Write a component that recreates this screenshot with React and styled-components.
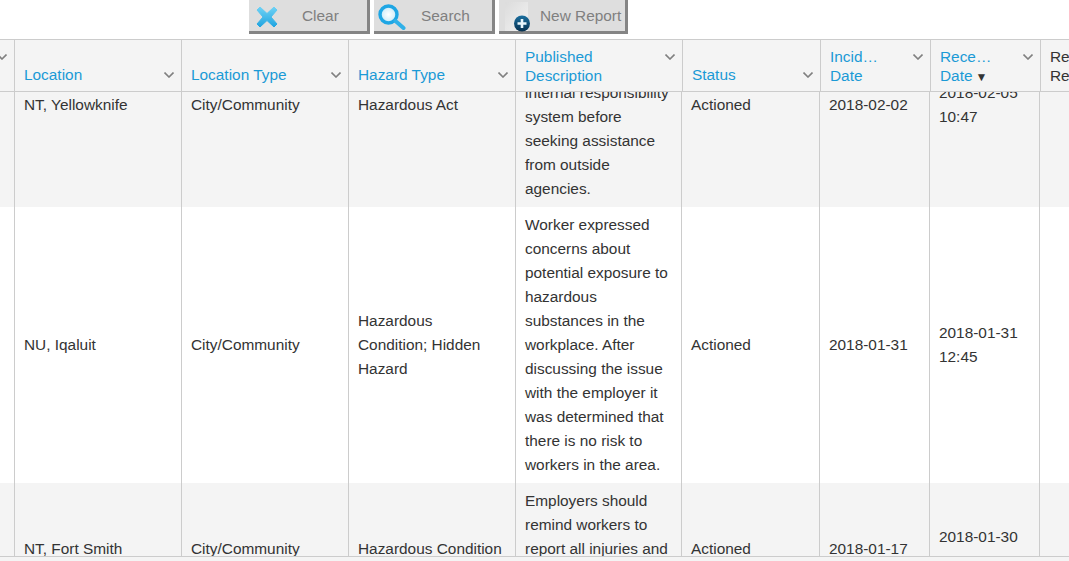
import styled, { createGlobalStyle } from 'styled-components'

const HEAD_COLS = '15px 167px 167px 167px 167px 138px 110px 110px 1fr'
const BODY_COLS = '15px 167px 167px 167px 166px 138px 110px 110px 1fr'

const GlobalStyle = createGlobalStyle`
  html, body {
    margin: 0;
    height: 100%;
    overflow: hidden;
    background: #fff;
    font-family: "Liberation Sans", Arial, sans-serif;
    font-size: 15.4px;
    color: #333;
  }
`

const Page = styled.div`
  width: 1069px;
  height: 561px;
  display: flex;
  flex-direction: column;
  overflow: hidden;
`

const Toolbar = styled.div`
  height: 39px;
  flex: none;
  display: flex;
  gap: 4px;
  padding-left: 249px;
  box-sizing: border-box;
`

const ToolButton = styled.button`
  width: ${(p) => p.$width}px;
  height: 34px;
  box-sizing: border-box;
  display: flex;
  align-items: center;
  padding: 1px 0 0 ${(p) => p.$pad}px;
  margin: 0;
  background: #dedede;
  border: 0;
  border-right: 3px solid #858585;
  border-bottom: 3px solid #858585;
  color: #808080;
  font: inherit;
`

const ToolLabel = styled.span`
  margin-left: ${(p) => p.$gap}px;
  white-space: nowrap;
`

const HeaderRow = styled.div`
  height: 53px;
  flex: none;
  display: grid;
  grid-template-columns: ${HEAD_COLS};
  box-sizing: border-box;
  background: #f4f4f4;
  border-top: 1px solid #ccc;
  border-bottom: 1px solid #ccc;
`

const HeaderCell = styled.div`
  display: flex;
  align-items: flex-end;
  box-sizing: border-box;
  padding: 0 7px ${(p) => (p.$double ? 6 : 7)}px ${(p) => (p.$clip ? 0 : 9)}px;
  border-right: 1px solid #ccc;
  overflow: hidden;
  &:last-child {
    border-right: 0;
    padding-right: 0;
  }
`

const HeaderInner = styled.div`
  flex: 1;
  min-width: 0;
  display: flex;
  justify-content: flex-end;
  align-items: flex-start;
`

const HeaderLabel = styled.div`
  flex: 1;
  min-width: 0;
  line-height: 19px;
  white-space: nowrap;
  color: ${(p) => (p.$plain ? '#333' : '#1b9ad6')};
`

const SortMark = styled.span`
  font-size: 12px;
  line-height: 0;
  color: #333;
  margin-left: 3px;
`

const Chevron = styled.svg`
  flex: none;
  width: 10px;
  height: 6px;
  margin-top: 7px;
  fill: none;
  stroke: #808080;
  stroke-width: 1.6;
`

const Viewport = styled.div`
  flex: 1;
  min-height: 0;
  overflow: hidden;
  border-bottom: 1px solid #ccc;
`

const Rows = styled.div`
  margin-top: -89px;
`

const Row = styled.div`
  display: grid;
  grid-template-columns: ${BODY_COLS};
  background: ${(p) => (p.$shaded ? '#f4f4f4' : '#fff')};
`

const Cell = styled.div`
  display: flex;
  flex-direction: column;
  justify-content: center;
  box-sizing: border-box;
  padding: 6px 10px 6px 9px;
  line-height: 24px;
  border-right: 1px solid #ccc;
  &:first-child {
    padding: 0;
  }
  &:last-child {
    border-right: 0;
  }
`

const Description = styled(Cell)`
  display: block;
  white-space: pre-line;
`

const Footer = styled.div`
  height: 4px;
  flex: none;
  background: #f4f4f4;
`

const ClearIcon = () => (
  <svg width="22" height="24" viewBox="0 -2 22 24">
    <defs>
      <linearGradient id="clearBlue" x1="0" y1="0" x2="0" y2="1">
        <stop offset="0" stopColor="#6fd2f5" />
        <stop offset="1" stopColor="#1fa4e0" />
      </linearGradient>
    </defs>
    <path
      d="M1 4 L4 1 L11 7.5 L18 1 L21 4 L15 11 L21 18 L18 21 L11 14.5 L4 21 L1 18 L7 11 Z"
      fill="url(#clearBlue)"
      stroke="url(#clearBlue)"
      strokeLinejoin="round"
    />
  </svg>
)

const SearchIcon = () => (
  <svg width="28" height="28" viewBox="0 -2 28 28">
    <defs>
      <radialGradient id="lens" cx="0.5" cy="0.5" r="0.5">
        <stop offset="0" stopColor="#fff" />
        <stop offset="0.7" stopColor="#d8f0fa" />
        <stop offset="1" stopColor="#8fd6f3" />
      </radialGradient>
    </defs>
    <circle cx="10.5" cy="10.5" r="8.5" fill="url(#lens)" stroke="#1ea6e4" strokeWidth="3.4" />
    <path d="M17.5 17 L25.5 24" stroke="#2fb0e8" strokeWidth="4" strokeLinecap="round" />
  </svg>
)

const NewReportIcon = () => (
  <svg width="26" height="32" viewBox="0 0 26 32">
    <defs>
      <linearGradient id="sheet" x1="0" y1="0" x2="1" y2="1">
        <stop offset="0" stopColor="#dcdcdc" />
        <stop offset="1" stopColor="#f2f2f2" />
      </linearGradient>
      <linearGradient id="disc" x1="0" y1="0" x2="0" y2="1">
        <stop offset="0" stopColor="#1b6f9f" />
        <stop offset="1" stopColor="#06304f" />
      </linearGradient>
    </defs>
    <rect x="0" y="2" width="23" height="29" fill="url(#sheet)" />
    <circle cx="17" cy="23.5" r="8" fill="url(#disc)" />
    <path d="M17 19 V28 M12.5 23.5 H21.5" stroke="#e8f6fc" strokeWidth="2.6" />
  </svg>
)

const columns = [
  { lines: ['', ''], clip: true },
  { lines: ['Location'] },
  { lines: ['Location Type'] },
  { lines: ['Hazard Type'] },
  { lines: ['Published', 'Description'] },
  { lines: ['Status'] },
  { lines: ['Incid…', 'Date'] },
  { lines: ['Rece…', 'Date'], sorted: true },
  { lines: ['Response', 'Received'], plain: true, noChevron: true },
]

const rows = [
  {
    location: 'NT, Yellowknife',
    hazard: 'Hazardous Act',
    description:
      'Workers are encouraged to use the workplace\ninternal responsibility system before\nseeking assistance\nfrom outside\nagencies.',
    status: 'Actioned',
    incident: '2018-02-02',
    received: ['2018-02-05', '10:47'],
  },
  {
    location: 'NU, Iqaluit',
    hazard: 'Hazardous Condition; Hidden Hazard',
    description:
      'Worker expressed concerns about potential exposure to hazardous substances in the workplace. After discussing the issue with the employer it was determined that there is no risk to workers in the area.',
    status: 'Actioned',
    incident: '2018-01-31',
    received: ['2018-01-31', '12:45'],
  },
  {
    location: 'NT, Fort Smith',
    hazard: 'Hazardous Condition',
    description:
      'Employers should remind workers to report all injuries and incidents to their employer.',
    status: 'Actioned',
    incident: '2018-01-17',
    received: ['2018-01-30', '10:00'],
  },
]

const App = () => {
  return (
    <Page>
      <GlobalStyle />
      <Toolbar>
        <ToolButton $width={121} $pad={7}>
          <ClearIcon />
          <ToolLabel $gap={24}>Clear</ToolLabel>
        </ToolButton>
        <ToolButton $width={121} $pad={4}>
          <SearchIcon />
          <ToolLabel $gap={15}>Search</ToolLabel>
        </ToolButton>
        <ToolButton $width={129} $pad={6}>
          <NewReportIcon />
          <ToolLabel $gap={9}>New Report</ToolLabel>
        </ToolButton>
      </Toolbar>

      <HeaderRow>
        {columns.map((col, i) => (
          <HeaderCell key={i} $clip={col.clip} $double={col.lines.length > 1}>
            <HeaderInner>
              <HeaderLabel $plain={col.plain}>
                {col.lines.map((line, j) => (
                  <div key={j}>
                    {line || '\u00a0'}
                    {col.sorted && j === 1 && <SortMark>▼</SortMark>}
                  </div>
                ))}
              </HeaderLabel>
              {!col.noChevron && (
                <Chevron viewBox="0 0 10 6">
                  <path d="M0.5 0.5 L5 5 L9.5 0.5" />
                </Chevron>
              )}
            </HeaderInner>
          </HeaderCell>
        ))}
      </HeaderRow>

      <Viewport>
        <Rows>
          {rows.map((row, i) => (
            <Row key={row.location} $shaded={i % 2 === 0}>
              <Cell />
              <Cell>{row.location}</Cell>
              <Cell>City/Community</Cell>
              <Cell>{row.hazard}</Cell>
              <Description>{row.description}</Description>
              <Cell>{row.status}</Cell>
              <Cell>{row.incident}</Cell>
              <Cell>
                {row.received.map((part) => (
                  <div key={part}>{part}</div>
                ))}
              </Cell>
              <Cell />
            </Row>
          ))}
        </Rows>
      </Viewport>
      <Footer />
    </Page>
  )
}

export default App
